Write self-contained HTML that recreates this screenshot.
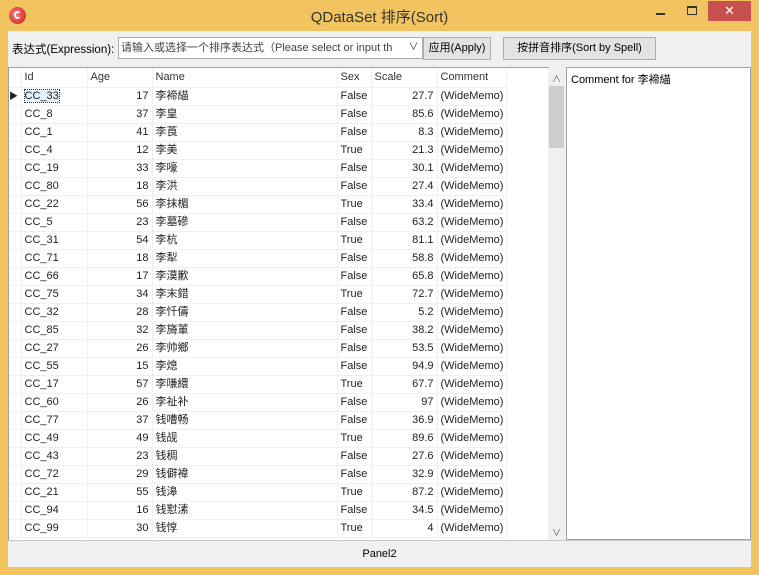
<!DOCTYPE html><html><head><meta charset="utf-8"><style>
*{margin:0;padding:0;box-sizing:border-box}
body{width:759px;height:575px;background:#f1c45f;font-family:"Liberation Sans","Noto Sans CJK SC",sans-serif;font-size:11.5px;color:#000;position:relative;overflow:hidden}
.abs{position:absolute}
.title{left:0;top:6px;width:759px;text-align:center;font-size:15px;color:#333}
.client{left:8px;top:31px;width:743px;height:536px;background:#f0f0f0}
.grid{left:8px;top:67px;width:541px;height:473px;background:#fff;border-left:1px solid #a0a0a0;border-top:1px solid #a0a0a0;overflow:hidden}
table{border-collapse:collapse;table-layout:fixed;font-size:11px;color:#222}
td{height:18px;border-right:1px solid #f0f0f0;border-bottom:1px solid #f0f0f0;padding:0 3px;white-space:nowrap;overflow:hidden;line-height:17px}
td.r{text-align:right}
tr.h td{color:#333;padding-top:1px;height:19px}
</style></head><body>
<div class="abs" style="left:9px;top:7px;width:17px;height:17px;border-radius:50%;background:radial-gradient(circle at 40% 40%,#ff7a7a,#c41818);"></div>
<div class="abs" style="left:14px;top:11px;width:7px;height:8px;border:2px solid #fff;border-radius:50%;border-right-color:transparent"></div>
<div class="abs title">QDataSet 排序(Sort)</div>
<div class="abs" style="left:656px;top:13px;width:9px;height:2px;background:#333"></div>
<div class="abs" style="left:687px;top:6px;width:10px;height:9px;border:1px solid #333;border-top-width:2px"></div>
<div class="abs" style="left:708px;top:1px;width:43px;height:20px;background:#c7504f;color:#fff;text-align:center;font-size:13px;line-height:20px">✕</div>
<div class="abs client"></div>
<div class="abs" style="left:12px;top:41px;font-size:11.5px">表达式(Expression):</div>
<div class="abs" style="left:118px;top:37px;width:305px;height:22px;background:#fff;border:1px solid #adadad;font-size:11px;line-height:20px;padding-left:2px;color:#444;overflow:hidden;white-space:nowrap">请输入或选择一个排序表达式（Please select or input th</div>
<div class="abs" style="left:405px;top:38px;width:17px;height:20px;background:#fff;font-size:10px;line-height:20px;text-align:center;color:#333">∨</div>
<div class="abs" style="left:423px;top:37px;width:68px;height:23px;background:#e3e3e3;border:1px solid #adadad;text-align:center;line-height:21px;font-size:11px">应用(Apply)</div>
<div class="abs" style="left:503px;top:37px;width:153px;height:23px;background:#e3e3e3;border:1px solid #adadad;text-align:center;line-height:21px;font-size:11px">按拼音排序(Sort by Spell)</div>
<div class="abs grid"><table>
<colgroup><col style="width:12px"><col style="width:66px"><col style="width:65px"><col style="width:185px"><col style="width:34px"><col style="width:66px"><col style="width:65px"></colgroup>
<tr class="h"><td></td><td>Id</td><td>Age</td><td>Name</td><td>Sex</td><td>Scale</td><td>Comment</td></tr>
<tr><td style="padding:0;font-size:9px">▶</td><td><span style="outline:1px dotted #333;background:#e5f1fb">CC_33</span></td><td class="r">17</td><td>李褅緢</td><td>False</td><td class="r">27.7</td><td>(WideMemo)</td></tr>
<tr><td></td><td>CC_8</td><td class="r">37</td><td>李皇</td><td>False</td><td class="r">85.6</td><td>(WideMemo)</td></tr>
<tr><td></td><td>CC_1</td><td class="r">41</td><td>李莨</td><td>False</td><td class="r">8.3</td><td>(WideMemo)</td></tr>
<tr><td></td><td>CC_4</td><td class="r">12</td><td>李美</td><td>True</td><td class="r">21.3</td><td>(WideMemo)</td></tr>
<tr><td></td><td>CC_19</td><td class="r">33</td><td>李嚎</td><td>False</td><td class="r">30.1</td><td>(WideMemo)</td></tr>
<tr><td></td><td>CC_80</td><td class="r">18</td><td>李洪</td><td>False</td><td class="r">27.4</td><td>(WideMemo)</td></tr>
<tr><td></td><td>CC_22</td><td class="r">56</td><td>李抹楣</td><td>True</td><td class="r">33.4</td><td>(WideMemo)</td></tr>
<tr><td></td><td>CC_5</td><td class="r">23</td><td>李墓磣</td><td>False</td><td class="r">63.2</td><td>(WideMemo)</td></tr>
<tr><td></td><td>CC_31</td><td class="r">54</td><td>李杭</td><td>True</td><td class="r">81.1</td><td>(WideMemo)</td></tr>
<tr><td></td><td>CC_71</td><td class="r">18</td><td>李犁</td><td>False</td><td class="r">58.8</td><td>(WideMemo)</td></tr>
<tr><td></td><td>CC_66</td><td class="r">17</td><td>李漠歉</td><td>False</td><td class="r">65.8</td><td>(WideMemo)</td></tr>
<tr><td></td><td>CC_75</td><td class="r">34</td><td>李末錯</td><td>True</td><td class="r">72.7</td><td>(WideMemo)</td></tr>
<tr><td></td><td>CC_32</td><td class="r">28</td><td>李忏儔</td><td>False</td><td class="r">5.2</td><td>(WideMemo)</td></tr>
<tr><td></td><td>CC_85</td><td class="r">32</td><td>李旖莗</td><td>False</td><td class="r">38.2</td><td>(WideMemo)</td></tr>
<tr><td></td><td>CC_27</td><td class="r">26</td><td>李帅鄉</td><td>False</td><td class="r">53.5</td><td>(WideMemo)</td></tr>
<tr><td></td><td>CC_55</td><td class="r">15</td><td>李熄</td><td>False</td><td class="r">94.9</td><td>(WideMemo)</td></tr>
<tr><td></td><td>CC_17</td><td class="r">57</td><td>李嗛繯</td><td>True</td><td class="r">67.7</td><td>(WideMemo)</td></tr>
<tr><td></td><td>CC_60</td><td class="r">26</td><td>李祉补</td><td>False</td><td class="r">97</td><td>(WideMemo)</td></tr>
<tr><td></td><td>CC_77</td><td class="r">37</td><td>钱嘈畅</td><td>False</td><td class="r">36.9</td><td>(WideMemo)</td></tr>
<tr><td></td><td>CC_49</td><td class="r">49</td><td>钱觇</td><td>True</td><td class="r">89.6</td><td>(WideMemo)</td></tr>
<tr><td></td><td>CC_43</td><td class="r">23</td><td>钱稠</td><td>False</td><td class="r">27.6</td><td>(WideMemo)</td></tr>
<tr><td></td><td>CC_72</td><td class="r">29</td><td>钱僻褘</td><td>False</td><td class="r">32.9</td><td>(WideMemo)</td></tr>
<tr><td></td><td>CC_21</td><td class="r">55</td><td>钱滜</td><td>True</td><td class="r">87.2</td><td>(WideMemo)</td></tr>
<tr><td></td><td>CC_94</td><td class="r">16</td><td>钱懟溸</td><td>False</td><td class="r">34.5</td><td>(WideMemo)</td></tr>
<tr><td></td><td>CC_99</td><td class="r">30</td><td>钱惇</td><td>True</td><td class="r">4</td><td>(WideMemo)</td></tr>
</table></div>
<div class="abs" style="left:548px;top:68px;width:17px;height:472px;background:#f0f0f0"></div>
<div class="abs" style="left:549px;top:72px;width:15px;text-align:center;font-size:9px;color:#555">∧</div>
<div class="abs" style="left:549px;top:526px;width:15px;text-align:center;font-size:9px;color:#555">∨</div>
<div class="abs" style="left:549px;top:86px;width:15px;height:62px;background:#cdcdcd"></div>
<div class="abs" style="left:566px;top:67px;width:185px;height:473px;background:#fff;border:1px solid #a0a0a0;padding:3px 4px;font-size:11px">Comment for 李褅緢</div>
<div class="abs" style="left:8px;top:540px;width:743px;height:27px;border-top:1px solid #c8c8c8;text-align:center;line-height:26px;font-size:11px">Panel2</div>
</body></html>
